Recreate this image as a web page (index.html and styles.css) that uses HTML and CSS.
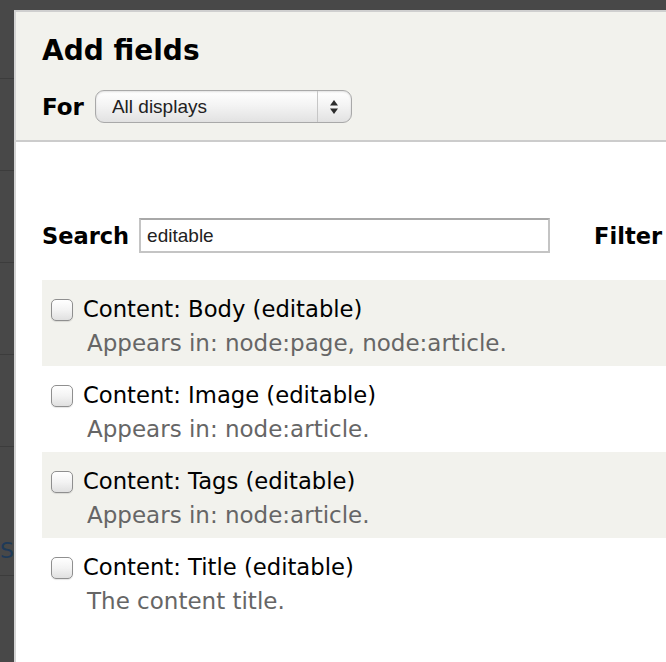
FILE: index.html
```html
<!DOCTYPE html>
<html lang="en">
<head>
<meta charset="UTF-8">
<meta name="viewport" content="width=device-width, initial-scale=1.0">
<title>Add fields</title>
<link rel="stylesheet" href="styles.css">
</head>
<body>

<div class="screen">
    <!-- page behind the dialog, dimmed by the overlay -->
    <div class="page-behind">
        <div class="ghost-row first"></div>
        <div class="ghost-row"></div>
        <div class="ghost-row"></div>
        <div class="ghost-row"></div>
        <div class="ghost-row"></div>
        <div class="ghost-row link-row"><span class="ghost-link">Se</span></div>
    </div>

    <div class="dialog">
        <div class="dialog-header">
            <h1>Add fields</h1>
            <div class="for-row">
                <label for="displays">For</label>
                <div class="select-wrap">
                    <select id="displays" name="displays">
                        <option value="default">All displays</option>
                        <option value="page">This page (override)</option>
                    </select>
                    <span class="select-arrows">
                        <svg width="10" height="16" viewBox="0 0 10 16">
                            <path d="M5 1 L9 6.5 H1 Z" fill="#2b2b2b"/>
                            <path d="M1 9.5 H9 L5 15 Z" fill="#2b2b2b"/>
                        </svg>
                    </span>
                </div>
            </div>
        </div>

        <div class="dialog-body">
            <div class="search-row">
                <label for="search">Search</label>
                <input type="text" id="search" name="search" value="editable">
                <span class="filter-label">Filter</span>
            </div>

            <div class="field-list">
                <div class="field odd">
                    <input type="checkbox" id="f-body">
                    <div class="field-text">
                        <label for="f-body">Content: Body (editable)</label>
                        <div class="description">Appears in: node:page, node:article.</div>
                    </div>
                </div>
                <div class="field">
                    <input type="checkbox" id="f-image">
                    <div class="field-text">
                        <label for="f-image">Content: Image (editable)</label>
                        <div class="description">Appears in: node:article.</div>
                    </div>
                </div>
                <div class="field odd">
                    <input type="checkbox" id="f-tags">
                    <div class="field-text">
                        <label for="f-tags">Content: Tags (editable)</label>
                        <div class="description">Appears in: node:article.</div>
                    </div>
                </div>
                <div class="field">
                    <input type="checkbox" id="f-title">
                    <div class="field-text">
                        <label for="f-title">Content: Title (editable)</label>
                        <div class="description">The content title.</div>
                    </div>
                </div>
            </div>
        </div>
    </div>
</div>

</body>
</html>
```

FILE: styles.css
```css
body {
    margin: 0;
    padding: 0;
    background-color: #484848;
    font-family: "DejaVu Sans", Verdana, sans-serif;
    overflow: hidden;
}

.screen {
    display: flex;
    height: 662px;
    width: 760px;
}

/* dimmed page on the left */
.page-behind {
    width: 14px;
    flex-shrink: 0;
    display: flex;
    flex-direction: column;
    overflow: hidden;
}

.ghost-row {
    height: 91px;
    border-bottom: 1px solid #3c3c3c;
}

.ghost-row.first {
    height: 78px;
}

.ghost-row.link-row {
    height: 129px;
    display: flex;
    align-items: flex-end;
    padding-bottom: 12px;
    box-sizing: border-box;
}

.ghost-link {
    color: #1e3a58;
    font-size: 22px;
    line-height: 24px;
    white-space: nowrap;
}

/* dialog */
.dialog {
    flex: 1;
    margin-top: 10px;
    background-color: #fff;
    border-top: 2px solid #cfcfcf;
    border-left: 2px solid #d4d4d4;
}

.dialog-header {
    background-color: #f2f2ed;
    padding: 23px 26px 17px;
    border-bottom: 2px solid #cccccc;
}

.dialog-header h1 {
    margin: 0;
    font-size: 28px;
    line-height: 32px;
    font-weight: bold;
    color: #000;
}

.for-row {
    display: flex;
    align-items: center;
    margin-top: 23px;
}

.for-row label {
    font-size: 23px;
    font-weight: bold;
    margin-right: 11px;
    color: #000;
}

.select-wrap {
    position: relative;
    width: 257px;
    height: 33px;
}

.select-wrap select {
    -webkit-appearance: none;
    appearance: none;
    width: 100%;
    height: 100%;
    margin: 0;
    padding: 0 0 0 16px;
    border: 1px solid #a9a9a9;
    border-radius: 9px;
    background: linear-gradient(#ffffff, #f4f4f4 45%, #e2e2e2);
    box-shadow: inset 0 1px 2px rgba(0, 0, 0, 0.12);
    font-family: "Liberation Sans", Arial, sans-serif;
    font-size: 19px;
    color: #222;
}

.select-arrows {
    position: absolute;
    top: 1px;
    right: 1px;
    bottom: 1px;
    width: 33px;
    border-left: 1px solid #c6c6c6;
    display: flex;
    align-items: center;
    justify-content: center;
    pointer-events: none;
}

/* body */
.dialog-body {
    padding: 76px 0 0 26px;
}

.search-row {
    display: flex;
    align-items: center;
    height: 35px;
}

.search-row label,
.filter-label {
    font-size: 22.5px;
    font-weight: bold;
    color: #000;
}

.search-row input {
    width: 411px;
    height: 35px;
    box-sizing: border-box;
    margin: 0 44px 0 10px;
    padding: 0 6px;
    border: 2px solid #c4c4c4;
    border-top-color: #a8a8a8;
    font-family: "Liberation Sans", Arial, sans-serif;
    font-size: 19px;
    color: #222;
    outline: none;
}

.field-list {
    margin-top: 27px;
}

.field {
    display: flex;
    align-items: flex-start;
    height: 86px;
    box-sizing: border-box;
    padding: 12px 0 0 9px;
}

.field.odd {
    background-color: #f2f2ed;
}

.field input[type="checkbox"] {
    -webkit-appearance: none;
    appearance: none;
    width: 22px;
    height: 22px;
    margin: 7px 10px 0 0;
    border: 1px solid #8f8f8f;
    border-radius: 5px;
    background: linear-gradient(#ffffff, #f3f3f3 50%, #e0e0e0);
    box-shadow: 0 1px 1px rgba(0, 0, 0, 0.1);
    flex-shrink: 0;
}

.field-text label {
    display: block;
    font-size: 22.7px;
    line-height: 34px;
    color: #000;
}

.description {
    font-size: 23px;
    line-height: 34px;
    color: #666;
    margin-left: 4px;
}
```
